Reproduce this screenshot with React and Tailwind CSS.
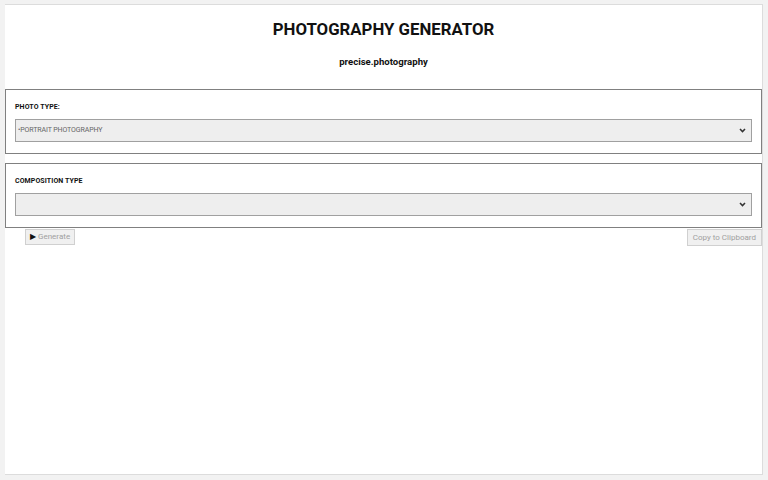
import React from "react";

function Chevron() {
  return (
    <svg width="7" height="5" viewBox="0 0 7 5" className="shrink-0">
      <path d="M1 1 L3.5 3.6 L6 1" fill="none" stroke="#333" strokeWidth="1.5" />
    </svg>
  );
}

function Section({ label, value }) {
  return (
    <div className="border border-[#808080] bg-white pt-[12px] pb-[11px] pl-[9px] pr-[9px]">
      <div className="text-[7px] leading-[10px] font-bold text-[#111] tracking-[0.1px] mb-[7px]">
        {label}
      </div>
      <div className="h-[23px] border border-[#a0a0a0] bg-[#eeeeee] flex items-center justify-between pl-[2px] pr-[5px]">
        <span className="text-[7px] text-[#666] tracking-[-0.1px]">{value}</span>
        <Chevron />
      </div>
    </div>
  );
}

export default function App() {
  return (
    <div
      className="w-[768px] h-[480px] bg-[#f2f2f2] pt-[4px] pl-[5px] pr-[5px] pb-[5px]"
      style={{ fontFamily: "Roboto, 'Liberation Sans', sans-serif" }}
    >
      <div className="h-full bg-white border border-[#dcdcdc] border-l-0 flex flex-col">
        <div className="flex flex-col items-center pt-[13px] h-[84px]">
          <div className="text-[16.8px] leading-[22px] font-bold text-[#111]">PHOTOGRAPHY GENERATOR</div>
          <div className="text-[9.6px] leading-[14px] font-bold text-[#111] mt-[15px]">precise.photography</div>
        </div>
        <div className="flex flex-col gap-[9px]">
          <Section label="PHOTO TYPE:" value="•PORTRAIT PHOTOGRAPHY" />
          <Section label="COMPOSITION TYPE" value="" />
        </div>
        <div className="flex justify-between items-start mt-[1px]">
          <button className="ml-[20px] h-[16px] px-[4px] border border-[#d0d0d0] bg-[#f0f0f0] text-[8px] text-[#a0a0a0] flex items-center gap-[2px]">
            <span className="text-[#111] text-[8px]">▶</span>Generate
          </button>
          <button className="h-[17px] px-[5px] border border-[#d0d0d0] bg-[#f0f0f0] text-[8px] text-[#a0a0a0] flex items-center">
            Copy to Clipboard
          </button>
        </div>
      </div>
    </div>
  );
}
